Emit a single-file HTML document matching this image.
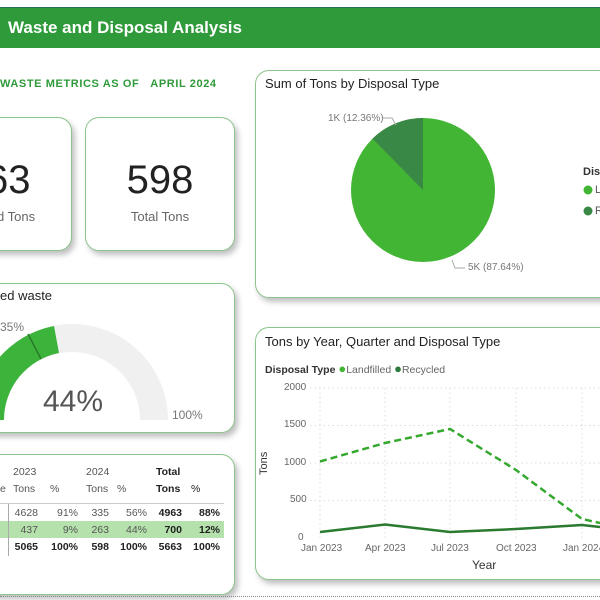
<!DOCTYPE html>
<html><head><style>
body{margin:0;width:600px;height:600px;overflow:hidden;background:#fff;font-family:"Liberation Sans",sans-serif}
#w{position:relative;width:600px;height:600px;overflow:hidden}
.a{position:absolute}
.card{position:absolute;background:#fff;border:1.5px solid #8cc48c;border-radius:14px;box-shadow:3px 4px 6px rgba(0,0,0,.25)}
.t{position:absolute;white-space:nowrap}
.tb{position:absolute;left:0;top:0;width:600px;height:600px;font-size:10.5px;color:#555}
.tb b{color:#222}
</style></head><body><div id="w">
<div class="a" style="left:0;top:7px;width:600px;height:1px;background:#2b6e5a"></div>
<div class="a" style="left:0;top:8px;width:600px;height:40px;background:#2f9a3a"></div>
<div class="t" style="left:8px;top:18px;color:#fff;font-size:17px;font-weight:bold">Waste and Disposal Analysis</div>
<div class="t" style="left:0;top:78px;color:#2f9a3a;font-size:11px;font-weight:bold;letter-spacing:.6px">WASTE METRICS AS OF &nbsp;&nbsp;APRIL 2024</div>

<div class="card" style="left:-20px;top:117px;width:90px;height:132px"></div>
<div class="t" style="left:-14px;top:158px;font-size:40px;color:#222">63</div>
<div class="t" style="left:-3px;top:209px;font-size:13px;color:#666">d Tons</div>
<div class="card" style="left:85px;top:117px;width:148px;height:132px"></div>
<div class="t" style="left:85px;width:150px;text-align:center;top:158px;font-size:40px;color:#222">598</div>
<div class="t" style="left:85px;width:150px;text-align:center;top:209px;font-size:13px;color:#666">Total Tons</div>

<div class="card" style="left:-20px;top:283px;width:253px;height:148px"></div>
<div class="t" style="left:0;top:288px;font-size:13px;color:#222">ed waste</div>
<svg class="a" style="left:0;top:283px" width="233" height="148">
<path d="M-24 137 A96 96 0 0 1 168 137 L140 137 A68 68 0 0 0 4 137Z" fill="#f0f0f0"/>
<path d="M-24 137 A96 96 0 0 1 54 43 L59 70 A68 68 0 0 0 4 137Z" fill="#3cb43c"/>
<line x1="28" y1="51" x2="41" y2="76" stroke="#2a7a2a" stroke-width="1.5"/>
</svg>
<div class="t" style="left:0;top:320px;font-size:12px;color:#777">35%</div>
<div class="t" style="left:43px;top:385px;font-size:30px;color:#555">44%</div>
<div class="t" style="left:172px;top:408px;font-size:12px;color:#777">100%</div>

<div class="card" style="left:-20px;top:454px;width:253px;height:139px"></div>
<div class="a" style="left:0;top:503px;width:224px;height:1px;background:#ccc"></div>
<div class="a" style="left:0;top:521px;width:224px;height:17px;background:#b5e2ac"></div>
<div class="a" style="left:8px;top:504px;width:1px;height:52px;background:#aaa"></div>
<div class="tb">
<div class="t" style="left:13px;top:466px">2023</div><div class="t" style="left:86px;top:466px">2024</div><div class="t" style="left:156px;top:466px;font-weight:bold;color:#222">Total</div>
<div class="t" style="left:0;top:483px">e</div><div class="t" style="left:13px;top:483px">Tons</div><div class="t" style="left:50px;top:483px">%</div><div class="t" style="left:86px;top:483px">Tons</div><div class="t" style="left:117px;top:483px">%</div><div class="t" style="left:156px;top:483px;font-weight:bold;color:#222">Tons</div><div class="t" style="left:191px;top:483px;color:#222">%</div>
<div class="t" style="right:562px;top:507px">4628</div><div class="t" style="right:522px;top:507px">91%</div><div class="t" style="right:491px;top:507px">335</div><div class="t" style="right:453px;top:507px">56%</div><div class="t" style="right:418px;top:507px"><b>4963</b></div><div class="t" style="right:380px;top:507px"><b>88%</b></div>
<div class="t" style="right:562px;top:524px">437</div><div class="t" style="right:522px;top:524px">9%</div><div class="t" style="right:491px;top:524px">263</div><div class="t" style="right:453px;top:524px">44%</div><div class="t" style="right:418px;top:524px"><b>700</b></div><div class="t" style="right:380px;top:524px"><b>12%</b></div>
<div class="t" style="right:562px;top:541px"><b>5065</b></div><div class="t" style="right:522px;top:541px"><b>100%</b></div><div class="t" style="right:491px;top:541px"><b>598</b></div><div class="t" style="right:453px;top:541px"><b>100%</b></div><div class="t" style="right:418px;top:541px"><b>5663</b></div><div class="t" style="right:380px;top:541px"><b>100%</b></div>
</div>

<div class="card" style="left:255px;top:70px;width:370px;height:226px"></div>
<div class="t" style="left:265px;top:76px;font-size:13px;color:#222">Sum of Tons by Disposal Type</div>
<svg class="a" style="left:0;top:0" width="600" height="600">
<circle cx="423" cy="190" r="72" fill="#42b535"/>
<path d="M423 190 L423 118 A72 72 0 0 0 372.5 138.6Z" fill="#3a8845"/>
<polyline points="383,118 392,118 396,125" fill="none" stroke="#aaa" stroke-width="1"/>
<polyline points="452,260 455,268 465,268" fill="none" stroke="#aaa" stroke-width="1"/>
<circle cx="588" cy="190" r="4.5" fill="#42b535"/><circle cx="588" cy="211" r="4.5" fill="#3a8845"/>
</svg>
<div class="t" style="left:328px;top:113px;font-size:10px;color:#777">1K (12.36%)</div>
<div class="t" style="left:468px;top:262px;font-size:10px;color:#777">5K (87.64%)</div>
<div class="t" style="left:583px;top:166px;font-size:11px;font-weight:bold;color:#333">Dis</div>
<div class="t" style="left:595px;top:184px;font-size:11px;color:#555">L</div>
<div class="t" style="left:595px;top:205px;font-size:11px;color:#555">R</div>

<div class="card" style="left:255px;top:327px;width:370px;height:251px"></div>
<div class="t" style="left:265px;top:334px;font-size:13px;color:#222">Tons by Year, Quarter and Disposal Type</div>
<div class="t" style="left:265px;top:361px;font-size:10.5px;color:#333"><b>Disposal Type</b> <span style="color:#42b535;font-size:13px">●</span><span style="color:#666">Landfilled</span> <span style="color:#2e7a3c;font-size:13px">●</span><span style="color:#666">Recycled</span></div>
<svg class="a" style="left:0;top:0" width="600" height="600">
<g stroke="#ddd" stroke-dasharray="1.5,3" stroke-width="1">
<line x1="310" y1="388" x2="600" y2="388"/><line x1="310" y1="425.5" x2="600" y2="425.5"/><line x1="310" y1="463" x2="600" y2="463"/><line x1="310" y1="500.5" x2="600" y2="500.5"/>
<line x1="320" y1="388" x2="320" y2="538"/><line x1="385" y1="388" x2="385" y2="538"/><line x1="450" y1="388" x2="450" y2="538"/><line x1="516" y1="388" x2="516" y2="538"/><line x1="582" y1="388" x2="582" y2="538"/>
</g>
<polyline points="320,461.5 385,443 450,429 516,470 582,519 600,523" fill="none" stroke="#35a82f" stroke-width="2.5" stroke-dasharray="7,4"/>
<polyline points="320,532 385,524.5 450,532 516,529 582,525 600,527" fill="none" stroke="#2a7a30" stroke-width="2.5"/>
</svg>
<div style="position:absolute;left:0;top:0;font-size:10px;color:#666">
<div class="t" style="left:284px;top:382px">2000</div><div class="t" style="left:284px;top:419px">1500</div><div class="t" style="left:284px;top:457px">1000</div><div class="t" style="left:290px;top:494px">500</div><div class="t" style="left:298px;top:532px">0</div>
<div class="t" style="left:301px;top:543px">Jan 2023</div><div class="t" style="left:365px;top:543px">Apr 2023</div><div class="t" style="left:431px;top:543px">Jul 2023</div><div class="t" style="left:496px;top:543px">Oct 2023</div><div class="t" style="left:563px;top:543px">Jan 2024</div>
</div>
<div class="t" style="left:472px;top:558px;font-size:12px;color:#333">Year</div>
<div class="t" style="left:258px;top:475px;font-size:11px;color:#333;transform:rotate(-90deg);transform-origin:left top">Tons</div>

<div class="a" style="left:0;top:596px;width:600px;border-top:1px dotted #888"></div>
</div></body></html>
